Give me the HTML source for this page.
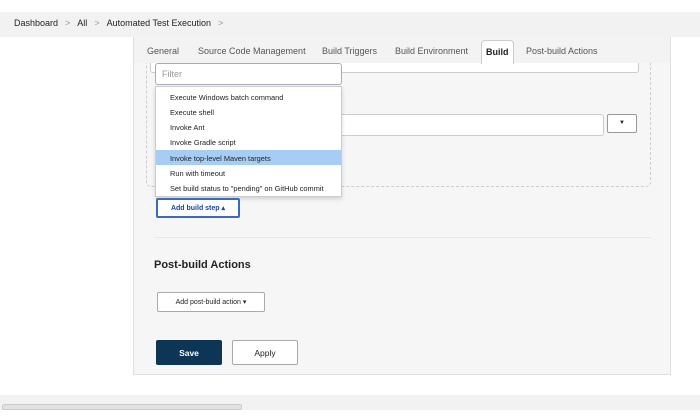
<!DOCTYPE html>
<html><head><style>
*{box-sizing:border-box;margin:0;padding:0}
body{width:700px;height:418px;background:#fff;font-family:"Liberation Sans",Arial,sans-serif;position:relative;overflow:hidden;color:#333}
.abs{position:absolute;white-space:nowrap}
.bc{left:0;top:12px;width:700px;height:25px;background:#f2f2f2;font-size:9px;color:#222;padding:6px 0 0 14px}
.bc span{color:#999;margin:0 7px}
.panel{left:133px;top:37px;width:538px;height:338px;background:#f6f6f6;border:1px solid #e0e0e0;border-top:none}
.tabs{left:134px;top:37px;width:536px;height:26px;font-size:9px;color:#555;background:#f3f3f3}
.tab{position:absolute;top:9px;white-space:nowrap}
.btab{position:absolute;left:347px;top:3px;width:33px;height:24px;background:#fff;border:1px solid #ccc;border-bottom:none;border-radius:4px 4px 0 0;font-weight:bold;color:#222;padding:6px 0 0 4px}
.input{background:#fff;border:1px solid #ccc;border-radius:3px}
.menu{left:155px;top:86px;width:187px;height:111px;background:#fff;border:1px solid #ccc;box-shadow:0 2px 4px rgba(0,0,0,.15);font-size:7.4px;color:#222}
.mi{height:15.2px;padding:4px 0 0 14px;white-space:nowrap}
.hl{background:#a8cdf5}
.btn{background:#fff;border:1px solid #aaa;border-radius:2px;font-size:7.5px;color:#222;text-align:center}
</style></head><body>
<div class="abs bc">Dashboard<span>&gt;</span>All<span>&gt;</span>Automated Test Execution<span>&gt;</span></div>
<div class="abs panel"></div>
<div class="abs" style="left:146px;top:58px;width:505px;height:129px;border:1px dashed #ccc;border-top:none;border-radius:0 0 5px 5px"></div>
<div class="abs input" style="left:150px;top:50px;width:489px;height:23px"></div>
<div class="abs input" style="left:300px;top:114px;width:304px;height:22px"></div>
<div class="abs btn" style="left:607px;top:114px;width:30px;height:19px;border-color:#999;font-size:6px;padding-top:5px">▼</div>
<div class="abs tabs">
<div class="tab" style="left:13px">General</div>
<div class="tab" style="left:64px">Source Code Management</div>
<div class="tab" style="left:188px">Build Triggers</div>
<div class="tab" style="left:261px">Build Environment</div>
<div class="btab">Build</div>
<div class="tab" style="left:392px">Post-build Actions</div>
</div>
<div class="abs input" style="left:155px;top:63px;width:187px;height:22px;border-color:#aab;font-size:9px;color:#999;padding:5px 0 0 6px">Filter</div>
<div class="abs menu">
<div class="mi" style="padding-top:6px;height:17px">Execute Windows batch command</div>
<div class="mi">Execute shell</div>
<div class="mi">Invoke Ant</div>
<div class="mi">Invoke Gradle script</div>
<div class="mi hl">Invoke top-level Maven targets</div>
<div class="mi">Run with timeout</div>
<div class="mi">Set build status to "pending" on GitHub commit</div>
</div>
<div class="abs btn" style="left:156px;top:198px;width:84px;height:20px;border:2px solid #3b6bbf;color:#1a47a0;font-weight:bold;font-size:7px;padding-top:4px">Add build step ▴</div>
<div class="abs" style="left:154px;top:237px;width:497px;height:1px;background:#e8e8e8"></div>
<div class="abs" style="left:154px;top:259px;font-size:11px;font-weight:bold;color:#222">Post-build Actions</div>
<div class="abs btn" style="left:157px;top:292px;width:108px;height:20px;padding-top:5px;font-size:7px">Add post-build action ▾</div>
<div class="abs" style="left:156px;top:340px;width:66px;height:25px;background:#0d3656;border-radius:2px;color:#fff;font-size:8.5px;font-weight:bold;text-align:center;padding-top:8px">Save</div>
<div class="abs btn" style="left:232px;top:340px;width:66px;height:25px;font-size:8.5px;padding-top:7px">Apply</div>
<div class="abs" style="left:0;top:395px;width:700px;height:15px;background:#f2f2f2"></div>
<div class="abs" style="left:2px;top:404px;width:240px;height:6px;background:#e2e2e2;border:1px solid #ccc;border-radius:2px"></div>
</body></html>
